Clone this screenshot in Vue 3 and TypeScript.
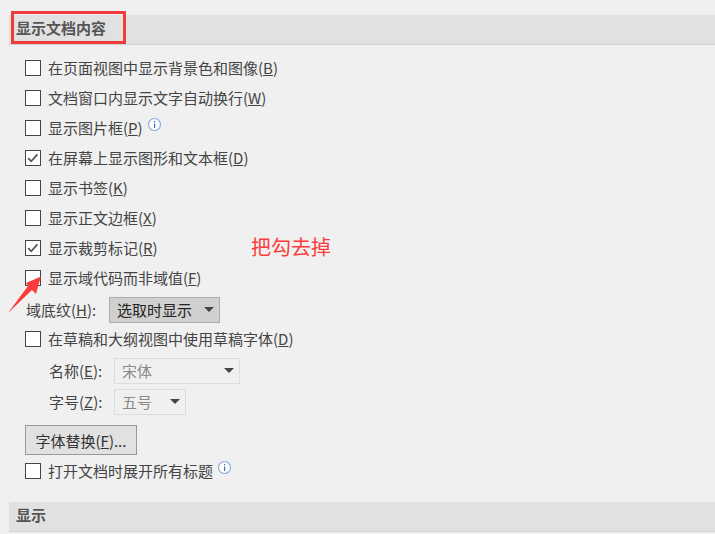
<script setup lang="ts">
interface Row { before: string; key: string; after: string; checked?: boolean; info?: boolean }
const topRows: Row[] = [
  { before: '在页面视图中显示背景色和图像(', key: 'B', after: ')' },
  { before: '文档窗口内显示文字自动换行(', key: 'W', after: ')' },
  { before: '显示图片框(', key: 'P', after: ')', info: true },
  { before: '在屏幕上显示图形和文本框(', key: 'D', after: ')', checked: true },
  { before: '显示书签(', key: 'K', after: ')' },
  { before: '显示正文边框(', key: 'X', after: ')' },
  { before: '显示裁剪标记(', key: 'R', after: ')', checked: true },
  { before: '显示域代码而非域值(', key: 'F', after: ')' },
]
</script>

<template>
  <main class="page">
    <header class="section first"><span>显示文档内容</span></header>
    <div class="rows">
      <label v-for="row in topRows" :key="row.key" class="row">
        <span class="box">
          <svg v-if="row.checked" viewBox="0 0 16 16" width="14" height="14"><path d="M2.5 8.2 6 11.8 13 3.8" fill="none" stroke="#555" stroke-width="2" /></svg>
        </span>
        <span class="text">{{ row.before }}<u>{{ row.key }}</u>{{ row.after }}</span>
        <svg v-if="row.info" class="info" viewBox="0 0 15 15" width="15" height="15"><circle cx="7.5" cy="7.5" r="6" fill="#fff" stroke="#8fb0dc" stroke-width="1.2" /><rect x="7" y="6.5" width="1.2" height="4.5" fill="#3f6fb5" /><rect x="7" y="4" width="1.2" height="1.3" fill="#3f6fb5" /></svg>
      </label>
    </div>
    <div class="field shade-row">
      <span class="text">域底纹(<u>H</u>):</span>
      <div class="select active">选取时显示<i class="caret"></i></div>
    </div>
    <label class="row draft">
      <span class="box"></span>
      <span class="text">在草稿和大纲视图中使用草稿字体(<u>D</u>)</span>
    </label>
    <div class="field indent name-row">
      <span class="text">名称(<u>E</u>):</span>
      <div class="select disabled wide">宋体<i class="caret"></i></div>
    </div>
    <div class="field indent size-row">
      <span class="text">字号(<u>Z</u>):</span>
      <div class="select disabled narrow">五号<i class="caret"></i></div>
    </div>
    <button class="btn" type="button">字体替换(<u>F</u>)...</button>
    <label class="row open-row">
      <span class="box"></span>
      <span class="text">打开文档时展开所有标题</span>
      <svg class="info" viewBox="0 0 15 15" width="15" height="15"><circle cx="7.5" cy="7.5" r="6" fill="#fff" stroke="#8fb0dc" stroke-width="1.2" /><rect x="7" y="6.5" width="1.2" height="4.5" fill="#3f6fb5" /><rect x="7" y="4" width="1.2" height="1.3" fill="#3f6fb5" /></svg>
    </label>
    <header class="section last"><span>显示</span></header>

    <div class="redbox"></div>
    <div class="note">把勾去掉</div>
    <svg class="arrow" width="50" height="50" viewBox="0 0 50 50"><path d="M8 46 28 19 26 16 41 9.5 36 27 32 23Z" fill="#fb3c3c" /></svg>
  </main>
</template>

<style scoped>
.page {
  position: relative;
  width: 715px;
  height: 534px;
  overflow: hidden;
  background: #f0f0f0;
  padding-top: 15px;
  box-sizing: border-box;
  font-family: "Noto Sans CJK SC", "Liberation Sans", sans-serif;
  font-size: 15px;
  color: #444;
}
.section {
  margin-left: 9px;
  height: 30px;
  box-sizing: border-box;
  background: #e1e1e1;
  border-bottom: 1px solid #d2d2d2;
  padding-left: 7px;
  line-height: 25px;
  font-weight: 700;
  color: #555;
}
.rows { margin-top: 8px; display: flex; flex-direction: column; }
.row {
  display: flex;
  align-items: center;
  height: 30px;
  padding-left: 25px;
}
.box {
  flex: none;
  width: 14px;
  height: 14px;
  border: 1px solid #444;
  background: #fff;
  margin-right: 7px;
  display: flex;
}
.text { white-space: nowrap; line-height: 20px; }
.info { margin: -8px 0 0 4px; }
.field { display: flex; align-items: center; }
.field .text { flex: none; width: 83px; }
.indent .text { width: 65px; }
.shade-row { margin: 2px 0 0 26px; height: 30px; }
.select {
  position: relative;
  box-sizing: border-box;
  height: 26px;
  line-height: 24px;
  padding-left: 7px;
  border: 1px solid #ababab;
}
.select.active { width: 111px; background: #d0d0d0; color: #222; }
.select.disabled { border-color: #dcdcdc; color: #8a8a8a; }
.wide { width: 126px; }
.narrow { width: 72px; }
.caret {
  position: absolute;
  right: 5px;
  top: 9px;
  border-style: solid;
  border-width: 5px 5px 0;
  border-color: #444 transparent transparent;
}
.draft { margin-top: -1px; }
.indent { padding-left: 49px; height: 30px; }
.name-row { margin-top: 2px; }
.size-row { margin-top: 1px; }
.btn {
  display: block;
  margin: 8px 0 0 25px;
  width: 112px;
  height: 30px;
  padding: 0;
  box-sizing: border-box;
  background: #e1e1e1;
  border: 1px solid #999;
  font: inherit;
  color: #333;
}
.open-row { margin-top: 1px; }
.section.last { margin-top: 16px; }
.redbox {
  position: absolute;
  left: 11px;
  top: 11px;
  width: 115px;
  height: 33px;
  box-sizing: border-box;
  border: 3px solid #ee3b3b;
}
.note {
  position: absolute;
  left: 251px;
  top: 233px;
  font-size: 20px;
  line-height: 28px;
  color: #fb3c3c;
}
.arrow { position: absolute; left: 0; top: 267px; }
</style>
